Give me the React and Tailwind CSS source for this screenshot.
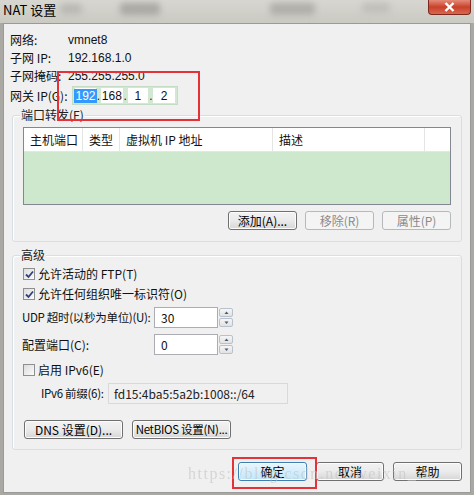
import React from 'react'

const cjk = { fontFamily: '"Noto Sans CJK SC", "Liberation Sans", sans-serif' }
const latin = { fontFamily: '"Liberation Sans", sans-serif' }

const Btn = ({ children, w = 'w-[69px]', disabled, primary }) => (
  <div
    className={`${w} h-[19px] shrink-0 whitespace-nowrap rounded-[3px] border flex items-center justify-center text-[12px] leading-none ${
      disabled
        ? 'border-[#b5b9bc] bg-[#f4f4f4] text-[#8a8a8a]'
        : primary
        ? 'border-[#3c7fb1] bg-gradient-to-b from-[#eaf6fd] to-[#bee6fd] text-black shadow-[inset_0_0_0_1px_#fff]'
        : 'border-[#707070] bg-gradient-to-b from-[#f2f2f2] via-[#ebebeb] to-[#d6d6d6] text-black shadow-[inset_0_0_0_1px_#fcfcfc]'
    }`}
  >
    {children}
  </div>
)

const Check = ({ on }) => (
  <div className="w-[12px] h-[12px] border border-[#8e8f8f] bg-gradient-to-br from-[#dcdcdc] to-[#fbfbfb] flex items-center justify-center shrink-0">
    {on && (
      <svg width="9" height="9" viewBox="0 0 9 9">
        <path d="M1 4.5 L3.5 7 L8 1.5" fill="none" stroke="#2f3f7f" strokeWidth="1.8" />
      </svg>
    )}
  </div>
)

const Spin = () => (
  <div className="w-[15px] h-full flex flex-col gap-[1px] pl-[1px] py-[1px]">
    {['M1.5 4 L3.5 1.5 L5.5 4 Z', 'M1.5 1.5 L3.5 4 L5.5 1.5 Z'].map((d, i) => (
      <div key={i} className="flex-1 border border-[#b8c2cc] rounded-[2px] bg-gradient-to-b from-[#f6f6f6] to-[#e2e2e2] flex items-center justify-center">
        <svg width="7" height="5" viewBox="0 0 7 5">
          <path d={d} fill="#4a5a70" />
        </svg>
      </div>
    ))}
  </div>
)

const Group = ({ label, className, children }) => (
  <div className={`relative border border-[#d5dfe5] rounded-[3px] shadow-[inset_1px_1px_0_#fff] ${className}`}>
    <span className="absolute left-[7px] top-[-9px] px-[1px] bg-[#f0f0f0] text-[12px] leading-[16px] text-[#222] whitespace-nowrap">{label}</span>
    {children}
  </div>
)

export default function App() {
  return (
    <div className="relative w-[474px] h-[495px] overflow-hidden bg-[#a9a8a2] text-[#111]" style={cjk}>
      {/* title bar */}
      <div className="relative h-[23px] bg-gradient-to-b from-[#d7d6d0] to-[#cac9c2] flex items-start">
        <span className="ml-[3px] mt-[2px] text-[13px] leading-[15px] text-black">NAT 设置</span>
        <div className="absolute left-[60px] top-[4px] w-[22px] h-[10px] bg-[#b9b8b2] rounded blur-[3px]" />
        <div className="absolute left-[120px] top-[3px] w-[40px] h-[12px] bg-[#aaa9a3] rounded blur-[3px]" />
        <div className="absolute left-[270px] top-[3px] w-[45px] h-[12px] bg-[#b0afa9] rounded blur-[3px]" />
        <div className="absolute left-[362px] top-[3px] w-[28px] h-[10px] bg-[#c0bfb9] rounded blur-[3px]" />
        <div className="absolute left-[428px] top-0 w-[43px] h-[15px] rounded-b-[4px] border border-t-0 border-[#7d2a1e] bg-gradient-to-b from-[#e48a78] via-[#c8402a] to-[#d8664e] flex items-center justify-center">
          <svg width="11" height="10" viewBox="0 0 11 10">
            <path d="M1.5 1 L9.5 9 M9.5 1 L1.5 9" stroke="#fff" strokeWidth="2.4" />
          </svg>
        </div>
      </div>

      {/* dialog body */}
      <div className="ml-[3px] w-[468px] h-[470px] border border-[#9a9a9a] bg-[#f0f0f0] flex flex-col pt-[7px]">
        <div className="pl-[6px] flex flex-col text-[12px] whitespace-nowrap">
          <div className="h-[18px] flex items-center"><span className="w-[58px]">网络:</span><span style={latin}>vmnet8</span></div>
          <div className="h-[18px] flex items-center"><span className="w-[58px]">子网 IP:</span><span style={latin}>192.168.1.0</span></div>
          <div className="h-[18px] flex items-center"><span className="w-[58px]">子网掩码:</span><span style={latin}>255.255.255.0</span></div>
          <div className="mt-[1px] h-[19px] flex items-center">
            <span className="w-[62px]">网关 IP(G):</span>
            <div className="h-[19px] w-[106px] bg-[#d2e8d2] border border-[#c4dcc4] flex items-center px-[2px] text-[12px]" style={latin}>
              <div className="w-[21px] h-[15px] bg-white flex items-center justify-center"><span className="bg-[#3399ff] text-white px-[1px] leading-[14px]">192</span></div>
              <span className="w-[5px] text-center">.</span>
              <div className="w-[22px] h-[15px] bg-white flex items-center justify-center">168</div>
              <span className="w-[5px] text-center">.</span>
              <div className="w-[21px] h-[15px] bg-white flex items-center justify-center">1</div>
              <span className="w-[5px] text-center">.</span>
              <div className="w-[22px] h-[15px] bg-white flex items-center justify-center">2</div>
            </div>
          </div>
        </div>

        <Group label="端口转发(F)" className="mt-[10px] mx-[8px] h-[127px] pl-[10px] pr-[10px] pt-[11px]">
          <div className="h-[78px] border border-[#828790] flex flex-col bg-[#cde8cd]">
            <div className="h-[24px] bg-white flex text-[12px] border-b border-[#e5e5e5] whitespace-nowrap">
              {[
                ['主机端口', 'w-[59px]'],
                ['类型', 'w-[37px]'],
                ['虚拟机 IP 地址', 'w-[153px]'],
                ['描述', 'w-[152px]'],
                ['', 'flex-1'],
              ].map(([t, w], i) => (
                <div key={i} className={`${w} flex items-center pl-[6px] ${i < 4 ? 'border-r border-[#e5e5e5]' : ''}`}>{t}</div>
              ))}
            </div>
          </div>
          <div className="mt-[6px] flex justify-end gap-[8px]">
            <Btn>添加(A)...</Btn>
            <Btn disabled>移除(R)</Btn>
            <Btn disabled>属性(P)</Btn>
          </div>
        </Group>

        <Group label="高级" className="mt-[13px] mx-[8px] h-[195px] pt-[8px] pl-[10px] text-[12px] whitespace-nowrap">
          <div className="h-[20px] flex items-center gap-[3px]"><Check on /><span>允许活动的 FTP(T)</span></div>
          <div className="h-[20px] flex items-center gap-[3px]"><Check on /><span>允许任何组织唯一标识符(O)</span></div>
          <div className="mt-[3px] h-[21px] flex items-center">
            <span className="w-[132px] shrink-0 -ml-[1px] text-[11.5px] tracking-[-0.3px]">UDP 超时(以秒为单位)(U):</span>
            <div className="w-[64px] h-full bg-white border border-[#abadb3] flex items-center pl-[6px]">30</div>
            <Spin />
          </div>
          <div className="mt-[6px] h-[21px] flex items-center">
            <span className="w-[132px] shrink-0 -ml-[1px]">配置端口(C):</span>
            <div className="w-[64px] h-full bg-white border border-[#abadb3] flex items-center pl-[6px]">0</div>
            <Spin />
          </div>
          <div className="mt-[5px] h-[20px] flex items-center gap-[3px]"><Check /><span>启用 IPv6(E)</span></div>
          <div className="mt-[3px] h-[21px] flex items-center pl-[18px]">
            <span className="w-[67px] shrink-0 text-[11.5px] tracking-[-0.3px]">IPv6 前缀(6):</span>
            <div className="w-[180px] h-full border border-[#d9d9d9] bg-[#f0f0f0] flex items-center pl-[5px] text-[#222]">fd15:4ba5:5a2b:1008::/64</div>
          </div>
          <div className="mt-[16px] flex gap-[9px] pl-[1px]">
            <Btn w="w-[99px]">DNS 设置(D)...</Btn>
            <Btn w="w-[99px]"><span className="text-[11.5px] tracking-[-0.3px]">NetBIOS 设置(N)...</span></Btn>
          </div>
        </Group>

        <div className="mt-[12px] mr-[8px] flex justify-end gap-[9px]">
          <Btn primary>确定</Btn>
          <Btn w="w-[68px]">取消</Btn>
          <Btn>帮助</Btn>
        </div>
      </div>

      {/* annotations */}
      <div className="absolute left-[57px] top-[71px] w-[143px] h-[50px] border-[2px] border-[#e53238]" />
      <div className="absolute left-[232px] top-[457px] w-[85px] h-[32px] border-[2px] border-[#e53238]" />
      <div
        className="absolute left-[188px] top-[464px] text-[16px] leading-[20px] tracking-[1.5px] text-[#c4c4c4] opacity-60 pointer-events-none"
        style={{ fontFamily: '"Liberation Serif", serif' }}
      >
        https://blog.csdn.net/weixin_in
      </div>
    </div>
  )
}
